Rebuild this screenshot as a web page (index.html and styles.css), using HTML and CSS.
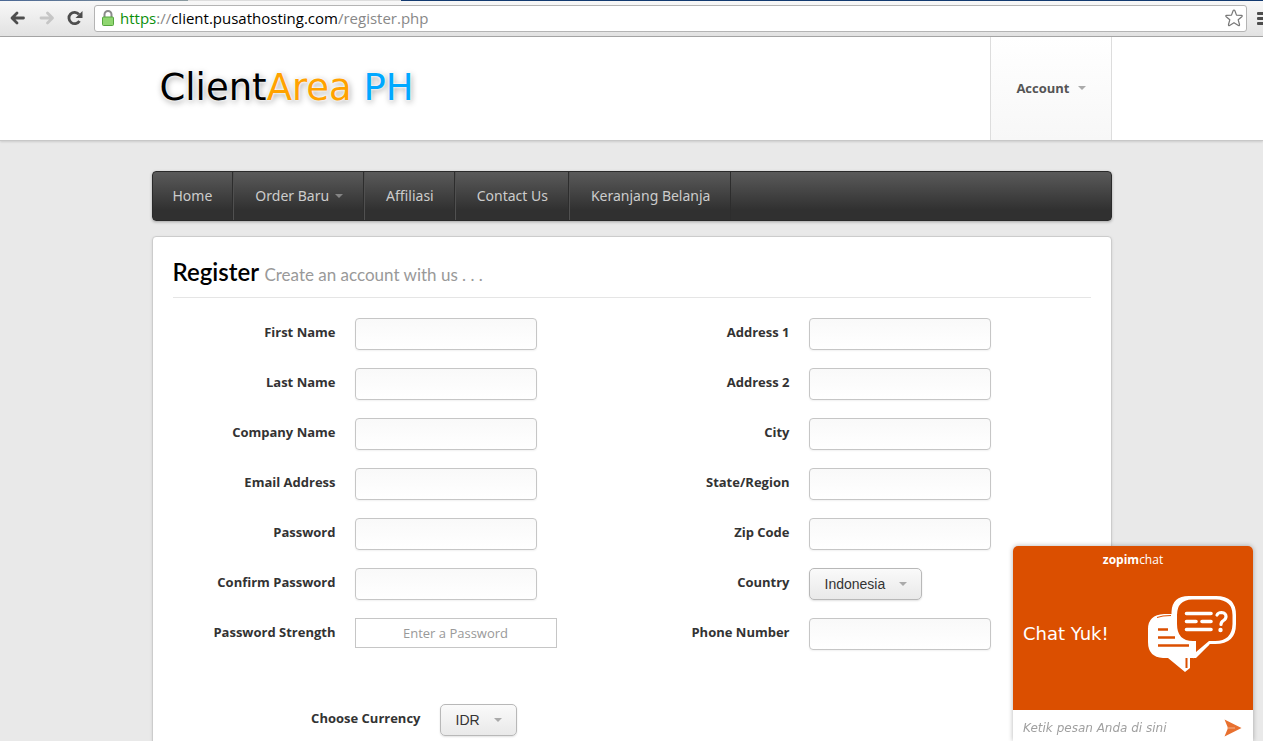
FILE: index.html
```html
<!DOCTYPE html>
<html lang="id">
<head>
    <meta charset="UTF-8">
    <meta name="viewport" content="width=device-width, initial-scale=1.0">
    <title>Register - ClientArea PH</title>
    <link rel="stylesheet" href="styles.css">
</head>
<body>
    <div class="toolbar">
        <button class="tool" type="button" aria-label="Back">
            <svg width="18" height="16" viewBox="0 0 18 16"><path d="M7 3 2 8l5 5M2.500 8H13.500" fill="none" stroke="#4d4d4d" stroke-width="2.800" stroke-linecap="round" stroke-linejoin="round"/></svg>
        </button>
        <button class="tool" type="button" aria-label="Forward">
            <svg width="18" height="16" viewBox="0 0 18 16"><path d="M9.500 3l5 5-5 5M14 8H3" fill="none" stroke="#c6c6c6" stroke-width="2.800" stroke-linecap="round" stroke-linejoin="round"/></svg>
        </button>
        <button class="tool" type="button" aria-label="Reload">
            <svg width="18" height="16" viewBox="0 0 18 16"><path d="M13 4.300A5.700 5.700 0 1 0 13.500 11" fill="none" stroke="#4d4d4d" stroke-width="2.800"/><path d="M16.500 1v7H9.500z" fill="#4d4d4d"/></svg>
        </button>
        <div class="address">
            <svg width="12" height="16" viewBox="0 0 12 16"><path d="M2.500 8V4.500a3.500 3.500 0 0 1 7 0V8" fill="none" stroke="#8b8b8b" stroke-width="2"/><rect x="0.500" y="7" width="11" height="8.500" rx="1" fill="#8fd670" stroke="#56a53f"/></svg>
            <span class="url"><span class="scheme">https</span>://<span class="host">client.pusathosting.com</span>/register.php</span>
            <svg class="star" width="18" height="18" viewBox="0 0 18 18"><path d="M9 1q.6 0 .9.800l1.600 4.300 4.900.3q1.500.2.400 1.300L13.200 10.800l1.300 4.700q.2 1.500-1.100.9L9 13.700l-4.400 2.700q-1.300.6-1.100-.9l1.300-4.700L1.200 7.700Q.1 6.600 1.600 6.400l4.900-.3 1.600-4.300Q8.400 1 9 1z" fill="#fff" stroke="#777" stroke-width="1.200" stroke-linejoin="round"/></svg>
        </div>
        <button class="menu-btn" type="button" aria-label="Menu"><span></span><span></span><span></span></button>
    </div>

    <header class="header">
        <div class="container header-inner">
            <a class="logo" href="#">Client<span class="logo-area">Area</span> <span class="logo-ph">PH</span></a>
            <a class="account" href="#">Account <span class="caret"></span></a>
        </div>
    </header>

    <div class="container">
        <nav class="nav">
            <a href="#">Home</a>
            <a href="#">Order Baru <span class="caret"></span></a>
            <a href="#">Affiliasi</a>
            <a href="#">Contact Us</a>
            <a href="#">Keranjang Belanja</a>
        </nav>

        <main class="card">
            <h1>Register <small>Create an account with us . . .</small></h1>
            <form>
                <div class="columns">
                    <div class="column">
                        <div class="row"><label for="firstname">First Name</label><input type="text" id="firstname"></div>
                        <div class="row"><label for="lastname">Last Name</label><input type="text" id="lastname"></div>
                        <div class="row"><label for="company">Company Name</label><input type="text" id="company"></div>
                        <div class="row"><label for="email">Email Address</label><input type="text" id="email"></div>
                        <div class="row"><label for="password">Password</label><input type="password" id="password"></div>
                        <div class="row"><label for="password2">Confirm Password</label><input type="password" id="password2"></div>
                        <div class="row"><label for="strength">Password Strength</label><output class="strength" id="strength">Enter a Password</output></div>
                    </div>
                    <div class="column">
                        <div class="row"><label for="address1">Address 1</label><input type="text" id="address1"></div>
                        <div class="row"><label for="address2">Address 2</label><input type="text" id="address2"></div>
                        <div class="row"><label for="city">City</label><input type="text" id="city"></div>
                        <div class="row"><label for="state">State/Region</label><input type="text" id="state"></div>
                        <div class="row"><label for="zip">Zip Code</label><input type="text" id="zip"></div>
                        <div class="row"><label for="country">Country</label><div class="select"><select id="country"><option>Indonesia</option></select><span class="caret"></span></div></div>
                        <div class="row"><label for="phone">Phone Number</label><input type="text" id="phone"></div>
                    </div>
                </div>
                <div class="row currency"><label for="currency">Choose Currency</label><div class="select"><select id="currency"><option>IDR</option></select><span class="caret"></span></div></div>
            </form>
        </main>
    </div>

    <aside class="chat">
        <div class="chat-top">
            <div class="chat-brand"><b>zopim</b>chat</div>
            <div class="chat-body">
                <span>Chat Yuk!</span>
                <svg width="90" height="78" viewBox="0 0 90 78">
                    <path d="M26 19H17Q1 20 1 34v13q0 15 15 16h5l17 14 5-4V63h6L62 50V19z" fill="#fff"/>
                    <path d="M11 34.500H21M11 42.500H28M11 50.500H42" stroke="#db4f00" stroke-width="2.500"/>
                    <path d="M39.500 63v10" stroke="#db4f00" stroke-width="2"/>
                    <path d="M10 22.500q5-2 14-2" stroke="#db4f00" fill="none"/>
                    <path d="M42 1H69Q89 1 89 20v9Q89 49 68 49h-5L46 63.500 47 49Q25 49 24.500 28V17Q25 1 42 1z" fill="#fff"/>
                    <path d="M45 4.500H69Q85.500 5 85.500 20v9Q85 46 68 46h-6L49 57V46H46Q30 46 30 29V20Q30 5 45 4.500z" fill="#db4f00"/>
                    <path d="M39.500 18.500H64M39.500 26.500H49M55 26.500H64M39.500 34.500H64" stroke="#fff" stroke-width="3.600" stroke-linecap="round"/>
                    <path d="M70 20q1-2.500 4.500-2.500 4.500.5 4.500 4 0 2.500-2.500 4-2.500 1.500-2.500 4" fill="none" stroke="#fff" stroke-width="3.200" stroke-linecap="round"/>
                    <circle cx="73.500" cy="35" r="2.200" fill="#fff"/>
                </svg>
            </div>
        </div>
        <div class="chat-input">
            <input type="text" placeholder="Ketik pesan Anda di sini" aria-label="Ketik pesan Anda di sini">
            <button type="button" aria-label="Kirim"><svg width="18" height="18" viewBox="0 0 18 18"><path d="M0.500 0.500l17 8.500-17 8.500L4 9z" fill="#e8702f"/><path d="M3 9h8" stroke="#f3b18c"/></svg></button>
        </div>
    </aside>
</body>
</html>
```

FILE: styles.css
```css
* { box-sizing: border-box; }
body { margin: 0; height: 100vh; overflow: hidden; background: #e9e9e9; color: #333; font: 13px/20px "Open Sans", sans-serif; }
a { text-decoration: none; }
button { padding: 0; border: none; background: none; }
svg { display: block; flex: none; }

.caret { display: inline-block; border-top: 4px solid #aaa; border-left: 4px solid transparent; border-right: 4px solid transparent; }

/* browser bar */
.toolbar { display: flex; align-items: center; height: 37px; padding-left: 10px; gap: 10px; overflow: hidden; background: linear-gradient(90deg, #4a6794 0, #8a9a9f 188px, #ddd 188px, #ddd 401px, #133a70 401px) top / 100% 1px no-repeat, linear-gradient(#f8f8f8, #e2e2e2); border-bottom: 1px solid #a6a6a6; }
.tool { flex: none; width: 18px; }
.address { display: flex; flex: 1; align-items: center; gap: 6px; height: 27px; padding: 0 3px 0 7px; background: #fff; border: 1px solid #b4b4b4; border-radius: 3px; }
.url { flex: 1; color: #888; font-size: 15px; white-space: nowrap; }
.scheme { color: #0b8f0b; }
.host { color: #000; }
.menu-btn { display: flex; flex: none; flex-direction: column; gap: 2px; width: 6px; }
.menu-btn span { width: 14px; height: 3px; background: #4d4d4d; border-radius: 1px; }

.container { width: 960px; max-width: 100%; margin: 0 auto; }
.header { background: #fff; border-bottom: 1px solid #c8c8c8; box-shadow: 0 1px 2px rgba(0, 0, 0, 0.12); }
.header-inner { display: flex; justify-content: space-between; height: 103px; }
.logo { padding: 28px 0 0 8px; color: #000; font: 37px/46px "DejaVu Sans", sans-serif; white-space: nowrap; text-shadow: 0 0 2px #fff, 0 0 3px #fff, 1px 2px 6px rgba(0, 0, 0, 0.4); }
.logo-area { color: #ffa200; }
.logo-ph { color: #00a8ff; }
.account { display: flex; align-items: center; gap: 8px; padding: 0 25px 2px; color: #555; font-weight: 700; background: linear-gradient(#fff, #f7f7f7); border: solid #ddd; border-width: 0 1px; }

.nav { display: flex; height: 50px; margin: 30px 0 15px; background: linear-gradient(#5a5a5a, #303030 80%); border: 1px solid #2a2a2a; border-radius: 4px; box-shadow: 0 1px 3px rgba(0, 0, 0, 0.3); }
.nav a { display: flex; align-items: center; gap: 6px; padding: 0 20px 0 21px; color: #ccc; font: 14px/20px "Noto Sans", sans-serif; border-left: 1px solid #505050; border-right: 1px solid #2d2d2d; }
.nav a:first-child { padding-left: 19px; border-left-color: transparent; }
.nav .caret { border-top-color: #858585; }

.card { padding: 20px 20px 40px; background: #fff; border: 1px solid #ccc; border-radius: 4px; box-shadow: 0 1px 3px rgba(0, 0, 0, 0.1); }
h1 { margin: 0 0 20px; padding-bottom: 7px; color: #000; font: 600 24px/30px Lato, sans-serif; border-bottom: 1px solid #e5e5e5; }
h1 small { color: #999; font-size: 17px; font-weight: 400; }

.columns { display: grid; grid-template-columns: 1fr 1fr; padding-right: 10px; }
.column { display: grid; gap: 18px; }
.row { display: flex; gap: 19px; height: 32px; }
.row label { width: 163px; padding-top: 4px; font-weight: 700; text-align: right; }
.row input { width: 182px; height: 32px; padding: 0 8px; font: inherit; background: linear-gradient(#f9f9f9, #fff); border: 1px solid #c6c6c6; border-radius: 4px; box-shadow: 0 1px 2px rgba(0, 0, 0, 0.06); }
.strength { width: 202px; height: 30px; line-height: 28px; color: #999; text-align: center; border: 1px solid #c6c6c6; }
.select { position: relative; }
.select select { height: 32px; padding: 0 35px 0 15px; appearance: none; color: #333; font: 14px "Liberation Sans", sans-serif; background: linear-gradient(#fafafa, #e9e9e9); border: 1px solid #b8b8b8; border-radius: 5px; box-shadow: 0 1px 2px rgba(0, 0, 0, 0.12); }
.select .caret { position: absolute; top: 14px; right: 15px; pointer-events: none; }
.currency { margin-top: 54px; }
.currency label { width: 248px; }

/* chat widget floats over the page */
.chat { position: fixed; right: 10px; bottom: 0; width: 240px; overflow: hidden; background: #fff; border-radius: 5px 5px 0 0; box-shadow: 0 0 5px rgba(0, 0, 0, 0.3); }
.chat-top { height: 164px; padding-top: 4px; color: #fff; background: #db4f00; }
.chat-brand { font-size: 12px; text-align: center; }
.chat-body { display: flex; align-items: center; justify-content: space-between; padding: 25px 16px 0 10px; font: 18px/24px "DejaVu Sans", sans-serif; }
.chat-input { display: flex; align-items: center; justify-content: space-between; height: 31px; padding: 5px 11px 0 10px; }
.chat-input input { flex: 1; min-width: 0; padding: 0; border: none; outline: none; font: italic 12px "DejaVu Sans", sans-serif; }
.chat-input input::placeholder { color: #a0a0a0; }
```
